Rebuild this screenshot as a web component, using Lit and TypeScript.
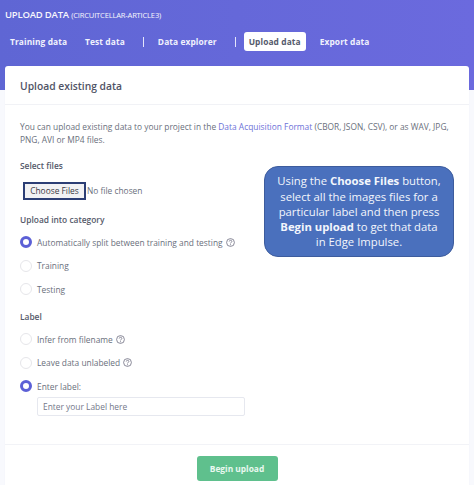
import { LitElement, html, css } from "lit";
import { customElement } from "lit/decorators.js";

const help = html`<svg class="help" viewBox="0 0 12 12" width="9" height="9" aria-hidden="true"><circle cx="6" cy="6" r="5.2" fill="none" stroke="#66667a" stroke-width="1"/><path d="M4.3 4.7c0-2.2 3.5-2.2 3.5-.1 0 1.3-1.8 1.3-1.8 2.7" fill="none" stroke="#66667a" stroke-width="1"/><circle cx="6" cy="9" r=".7" fill="#66667a"/></svg>`;

@customElement("app-root")
export class AppRoot extends LitElement {
  static styles = css`
    :host { display: block; width: 474px; height: 485px; overflow: hidden; position: relative; background: #f8f9fd; font-family: "Open Sans", "Noto Sans", sans-serif; color: #6a6f7c; }
    .head { height: 90px; box-sizing: border-box; padding: 8px 5px 0; background: linear-gradient(90deg, #5f66d4, #6b6ade); color: #fff; }
    .crumb { font-size: 9.5px; font-weight: 600; line-height: 13px; letter-spacing: -0.2px; opacity: .95; }
    .crumb small { font-size: 7.6px; font-weight: 400; }
    .tabs { display: flex; align-items: center; margin-top: 10px; font-size: 8.4px; font-weight: 700; height: 19px; letter-spacing: .1px; }
    .tab { padding: 0 5px; line-height: 19px; color: #f1f2fd; white-space: nowrap; }
    .tab.t1 { margin-right: 8px; }
    .tab.t2, .tab.t3 { margin-right: 13px; }
    .tab.active { background: #fff; color: #555a6c; border-radius: 3px; margin-right: 9px; }
    .sep { width: 1px; height: 10px; background: #e4e5fb; margin-right: 9px; }
    .sep.s2 { margin-right: 8px; }
    .card { margin: -24px 5px 0; height: 419px; background: #fff; border-radius: 3px 3px 0 0; display: flex; flex-direction: column; position: relative; box-shadow: 0 0 2px rgba(80,80,140,.06); }
    .title { height: 39px; box-sizing: border-box; border-bottom: 1px solid #f1f2f6; padding: 13px 15px 0; font-size: 10.3px; font-weight: 600; line-height: 14px; color: #4f5365; }
    .body { flex: 1; padding: 15px 15px 0; font-size: 8.4px; line-height: 13px; }
    .body p { margin: 0; white-space: nowrap; }
    .link { color: #6d72d8; }
    .lab { font-weight: 600; color: #55596a; font-size: 8.4px; line-height: 13px; }
    .l1 { margin-top: 13px; }
    .l2 { margin-top: 14px; }
    .l3 { margin-top: 15px; }
    .file { display: flex; align-items: center; margin: 10px 0 0 3px; height: 17px; font-size: 8.4px; }
    .choose { box-sizing: border-box; width: 63px; height: 18px; border: 2px solid #2c3e75; background: #f2f2f4; color: #3b3b44; display: flex; align-items: center; justify-content: center; font-size: 8.4px; margin-right: 1px; }
    .opts { display: flex; flex-direction: column; gap: 11.5px; margin-top: 10px; }
    .opt { display: flex; align-items: center; height: 12px; gap: 5px; }
    .radio { width: 12px; height: 12px; box-sizing: border-box; border-radius: 50%; border: 1px solid #e6e6ea; background: #fff; flex: none; }
    .radio.on { border: 3.5px solid #5c60d6; }
    .help { margin-left: 3px; vertical-align: -1px; }
    .input { box-sizing: border-box; width: 208px; height: 19px; margin: 5px 0 0 17px; border: 1px solid #e6e8ef; border-radius: 2px; padding: 0 5px; line-height: 17px; color: #74788a; font-size: 8.4px; }
    .foot { height: 41px; box-sizing: border-box; border-top: 1px solid #f2f3f7; display: flex; justify-content: center; padding-top: 11px; }
    .btn { width: 81px; height: 25px; border-radius: 3px; background: #5fc08d; color: #eaf8f0; font-size: 8.4px; font-weight: 700; display: flex; align-items: center; justify-content: center; }
    .call { position: absolute; left: 264px; top: 166px; width: 190px; height: 91px; box-sizing: border-box; background: #4a70bd; border: 1px solid #3d5c9d; border-radius: 14px; color: #f3f6fc; font-family: "Open Sans", sans-serif; font-size: 11.3px; line-height: 15.3px; text-align: center; display: flex; align-items: center; justify-content: center; white-space: nowrap; }
  `;

  render() {
    return html`
      <div class="head">
        <div class="crumb">UPLOAD DATA <small>(CIRCUITCELLAR-ARTICLE3)</small></div>
        <div class="tabs">
          <span class="tab t1">Training data</span>
          <span class="tab t2">Test data</span>
          <span class="sep"></span>
          <span class="tab t3">Data explorer</span>
          <span class="sep s2"></span>
          <span class="tab active">Upload data</span>
          <span class="tab">Export data</span>
        </div>
      </div>
      <div class="card">
        <div class="title">Upload existing data</div>
        <div class="body">
          <p>You can upload existing data to your project in the <span class="link">Data Acquisition Format</span> (CBOR, JSON, CSV), or as WAV, JPG,<br />PNG, AVI or MP4 files.</p>
          <div class="lab l1">Select files</div>
          <div class="file"><span class="choose">Choose Files</span>No file chosen</div>
          <div class="lab l2">Upload into category</div>
          <div class="opts">
            <div class="opt"><span class="radio on"></span><span>Automatically split between training and testing${help}</span></div>
            <div class="opt"><span class="radio"></span><span>Training</span></div>
            <div class="opt"><span class="radio"></span><span>Testing</span></div>
          </div>
          <div class="lab l3">Label</div>
          <div class="opts">
            <div class="opt"><span class="radio"></span><span>Infer from filename${help}</span></div>
            <div class="opt"><span class="radio"></span><span>Leave data unlabeled${help}</span></div>
            <div class="opt"><span class="radio on"></span><span>Enter label:</span></div>
          </div>
          <div class="input">Enter your Label here</div>
        </div>
        <div class="foot"><div class="btn">Begin upload</div></div>
      </div>
      <div class="call"><div>Using the <b>Choose Files</b> button,<br />select all the images files for a<br />particular label and then press<br /><b>Begin upload</b> to get that data<br />in Edge Impulse.</div></div>
    `;
  }
}
